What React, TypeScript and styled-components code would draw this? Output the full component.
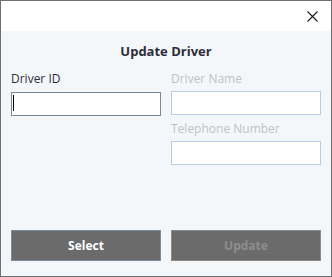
import { createGlobalStyle, styled } from "styled-components";

const Global = createGlobalStyle`
  html, body {
    margin: 0;
    padding: 0;
    background: #ffffff;
  }
  body {
    font-family: "Open Sans", "Noto Sans", sans-serif;
  }
`;

const Window = styled.div`
  box-sizing: border-box;
  width: 332px;
  height: 277px;
  border: 1px solid #6f6f6f;
  display: flex;
  flex-direction: column;
  background: #ffffff;
`;

const TitleBar = styled.div`
  height: 30px;
  display: flex;
  justify-content: flex-end;
  align-items: center;
  background: #ffffff;
`;

const CloseButton = styled.button`
  width: 30px;
  height: 30px;
  border: none;
  background: transparent;
  padding: 0;
  display: flex;
  align-items: center;
  justify-content: center;
  margin-right: 4px;
  cursor: pointer;
`;

const Body = styled.div`
  flex: 1;
  background: #f4f7f9;
  padding: 12px 10px 15px 10px;
  display: flex;
  flex-direction: column;
`;

const Heading = styled.h1`
  margin: 0;
  text-align: center;
  font-size: 13px;
  font-weight: 700;
  line-height: 16px;
  color: #2d2d3a;
`;

const Columns = styled.div`
  display: grid;
  grid-template-columns: 150px 150px;
  column-gap: 10px;
  margin-top: 12px;
`;

const Field = styled.div`
  display: flex;
  flex-direction: column;
  & + & {
    margin-top: 6px;
  }
`;

const Label = styled.label<{ $disabled?: boolean }>`
  font-size: 12px;
  line-height: 16px;
  height: 16px;
  margin-bottom: 4px;
  color: ${(p) => (p.$disabled ? "#c2c2c2" : "#2f2d3d")};
`;

const InputWrap = styled.div`
  position: relative;
  width: 150px;
  height: 24px;
`;

const Caret = styled.span`
  position: absolute;
  left: 2px;
  top: 4px;
  width: 1px;
  height: 16px;
  background: #000000;
  pointer-events: none;
`;

const Input = styled.input<{ $active?: boolean }>`
  box-sizing: border-box;
  width: 150px;
  height: 24px;
  margin: 0;
  padding: 0 2px;
  font-family: inherit;
  font-size: 12px;
  background: #ffffff;
  outline: none;
  border: 1px solid ${(p) => (p.$active ? "#7a8794" : "#b8cde2")};
  caret-color: transparent;
`;

const Buttons = styled.div`
  margin-top: auto;
  display: grid;
  grid-template-columns: 150px 150px;
  column-gap: 10px;
`;

const Button = styled.button<{ $disabled?: boolean }>`
  box-sizing: border-box;
  height: 31px;
  margin: 0;
  background: #6b6b6b;
  border: 1px solid ${(p) => (p.$disabled ? "#8b8b8b" : "#7a8da3")};
  color: ${(p) => (p.$disabled ? "#8d8d8d" : "#ffffff")};
  font-family: inherit;
  font-size: 12px;
  font-weight: 700;
  cursor: ${(p) => (p.$disabled ? "default" : "pointer")};
`;

function CloseIcon() {
  return (
    <svg width="11" height="11" viewBox="0 0 11 11">
      <path d="M0.5 0.5 L10.5 10.5 M10.5 0.5 L0.5 10.5" stroke="#1a1a1a" strokeWidth="1.1" fill="none" />
    </svg>
  );
}

export default function App() {
  return (
    <>
      <Global />
      <Window>
        <TitleBar>
          <CloseButton aria-label="Close">
            <CloseIcon />
          </CloseButton>
        </TitleBar>
        <Body>
          <Heading>Update Driver</Heading>
          <Columns>
            <div>
              <Field>
                <Label>Driver ID</Label>
                <InputWrap>
                  <Input $active />
                  <Caret />
                </InputWrap>
              </Field>
            </div>
            <div>
              <Field>
                <Label $disabled>Driver Name</Label>
                <Input disabled />
              </Field>
              <Field>
                <Label $disabled>Telephone Number</Label>
                <Input disabled />
              </Field>
            </div>
          </Columns>
          <Buttons>
            <Button>Select</Button>
            <Button $disabled disabled>
              Update
            </Button>
          </Buttons>
        </Body>
      </Window>
    </>
  );
}
